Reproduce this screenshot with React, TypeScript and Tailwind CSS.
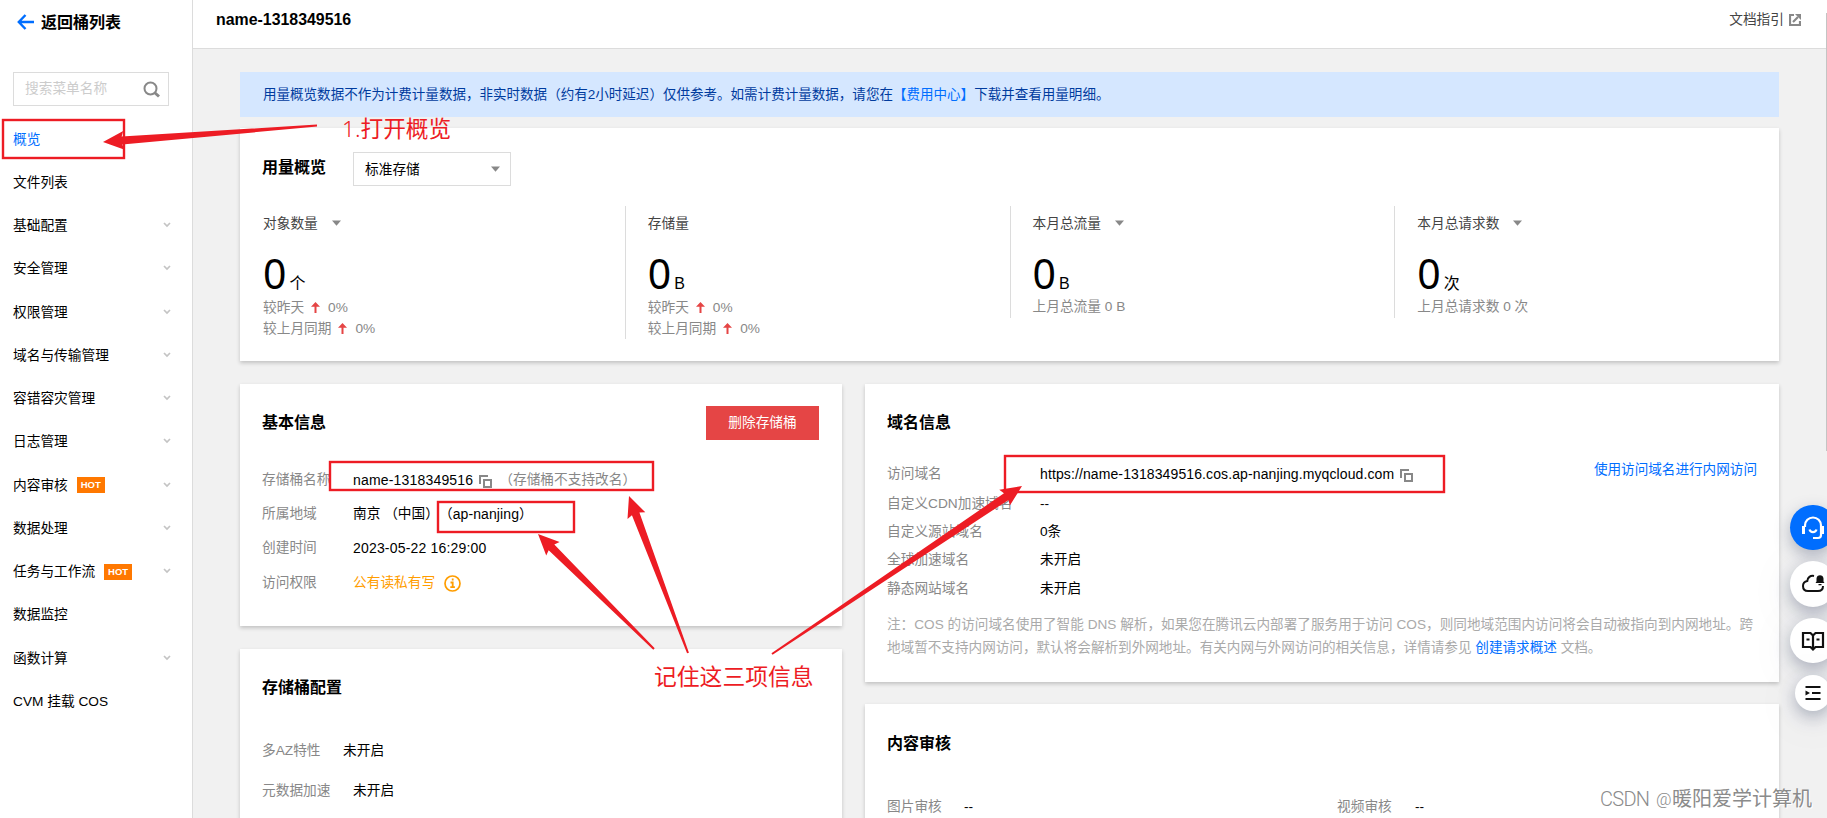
import type { ReactNode } from "react";

const menu = [
  { name: "概览", active: true },
  { name: "文件列表" },
  { name: "基础配置", more: true },
  { name: "安全管理", more: true },
  { name: "权限管理", more: true },
  { name: "域名与传输管理", more: true },
  { name: "容错容灾管理", more: true },
  { name: "日志管理", more: true },
  { name: "内容审核", more: true, hot: true },
  { name: "数据处理", more: true },
  { name: "任务与工作流", more: true, hot: true },
  { name: "数据监控" },
  { name: "函数计算", more: true },
  { name: "CVM 挂载 COS" },
];

function Caret({ className = "" }: { className?: string }) {
  return (
    <svg className={className} width="9" height="6" viewBox="0 0 9 6">
      <path d="M0 0.5h9L4.5 5.8z" fill="#888" />
    </svg>
  );
}

function CopyIcon({ className = "" }: { className?: string }) {
  return (
    <svg className={className} width="13" height="13" viewBox="0 0 13 13" fill="none" stroke="#888" strokeWidth="2">
      <path d="M1 9V1h8" />
      <path d="M5 5h7v7H5z" />
    </svg>
  );
}

function UpArrow() {
  return (
    <svg width="9" height="11" viewBox="0 0 9 11">
      <path d="M4.5 0L9 4.8H5.5V11h-2V4.8H0z" fill="#e54545" />
    </svg>
  );
}

function Sidebar() {
  return (
    <aside className="flex w-[193px] shrink-0 flex-col border-r border-[#dcdcdc] bg-white">
      <div className="flex h-[44px] items-center pl-[17px]">
        <svg width="18" height="16" viewBox="0 0 18 16" fill="none" stroke="#006eff" strokeWidth="2.400">
          <path d="M8.500 1L1.800 8l6.700 7M2 8h15" />
        </svg>
        <span className="mt-[2px] ml-1.5 text-base font-bold">返回桶列表</span>
      </div>

      {/* Search */}
      <div className="mt-7 ml-[13px] flex h-[34px] w-[156px] items-center justify-between border border-[#dcdcdc] pr-2 pl-[11px]">
        <span className="text-[#ccc]">搜索菜单名称</span>
        <svg width="17" height="17" viewBox="0 0 17 17" fill="none" stroke="#888" strokeWidth="2">
          <circle cx="7.500" cy="7.500" r="6" />
          <path d="M11.500 11.500L16 15.500" strokeWidth="3" />
        </svg>
      </div>

      <ul className="mt-[12px]">
        {menu.map((item) => (
          <li key={item.name} className="flex h-[43.250px] items-center pr-[21px] pl-[13px]">
            <span className={item.active ? "text-[#006eff]" : ""}>{item.name}</span>
            {item.hot && (
              <span className="-mt-px ml-[9px] flex h-4 w-7 items-center justify-center bg-[#ff7800] text-[9.500px] font-bold text-white">
                HOT
              </span>
            )}
            {item.more && (
              <svg className="mt-[-2px] ml-auto" width="8" height="6" viewBox="0 0 8 6" fill="none" stroke="#c4c4c4" strokeWidth="1.700">
                <path d="M1 1l3 3 3-3" />
              </svg>
            )}
          </li>
        ))}
      </ul>
    </aside>
  );
}

type StatProps = {
  label: string;
  unit: string;
  caret?: boolean;
  first?: boolean;
  tall?: boolean;
  children: ReactNode;
};

function Stat({ label, unit, caret, first, tall, children }: StatProps) {
  return (
    <div
      className={`flex-1 border-l pl-[22px] ${first ? "border-transparent" : "border-[#dcdcdc]"} ${tall ? "h-[133px]" : "h-[112px]"}`}
    >
      <div className="flex h-[34px] items-center text-[#444]">
        <span className="mt-px">{label}</span>
        {caret && <Caret className="ml-[14px]" />}
      </div>
      <div className="flex h-[57px] items-baseline">
        <span className="font-['Noto_Sans'] text-[41px] leading-[67px] tracking-[-1px]">0</span>
        <span className="ml-[4px] text-base">{unit}</span>
      </div>
      <div className="text-[#888]">{children}</div>
    </div>
  );
}

function Trend({ label }: { label: string }) {
  return (
    <div className="flex h-[21px] items-center">
      <span className="mr-[7px]">{label}</span>
      <UpArrow />
      <span className="ml-[8px]">0%</span>
    </div>
  );
}

function Card({ className = "", children }: { className?: string; children: ReactNode }) {
  return <section className={`bg-white shadow-[0_2px_4px_rgba(0,0,0,0.2)] ${className}`}>{children}</section>;
}

function Title({ children }: { children: ReactNode }) {
  return <h3 className="text-base font-bold">{children}</h3>;
}

function BasicInfo() {
  return (
    <Card className="h-[242px] pt-[22px] pr-[23px] pl-[22px]">
      <div className="flex h-[34px] items-center justify-between">
        <Title>基本信息</Title>
        <button className="h-[34px] w-[113px] bg-[#e54545] text-white">删除存储桶</button>
      </div>
      <div className="mt-[23px] flex flex-col">
        <div className="flex h-[34.200px] items-center">
          <span className="w-[91px] text-[#888]">存储桶名称</span>
          <span className="text-sm tracking-[0.180px]">name-1318349516</span>
          <CopyIcon className="mt-[3px] ml-[6px]" />
          <span className="ml-[7px] text-[#888]">（存储桶不支持改名）</span>
        </div>
        <div className="flex h-[34.200px] items-center">
          <span className="w-[91px] text-[#888]">所属地域</span>
          <span>南京 （中国）</span>
          <span>（</span>
          <span className="text-sm tracking-[0.100px]">ap-nanjing</span>
          <span>）</span>
        </div>
        <div className="flex h-[34.200px] items-center">
          <span className="w-[91px] text-[#888]">创建时间</span>
          <span className="text-sm tracking-[0.180px]">2023-05-22 16:29:00</span>
        </div>
        <div className="flex h-[34.200px] items-center">
          <span className="w-[91px] text-[#888]">访问权限</span>
          <span className="mt-px text-[#ff9d00]">公有读私有写</span>
          <svg className="mt-[2px] ml-[9px]" width="17" height="17" viewBox="0 0 17 17" fill="none" stroke="#ff9d00">
            <circle cx="8.500" cy="8.500" r="7.500" strokeWidth="1.700" />
            <path d="M8.700 3.500v2M6.500 7.500h2.200v4.500M6.300 12.200h4.600" strokeWidth="1.800" />
          </svg>
        </div>
      </div>
    </Card>
  );
}

function BucketConfig() {
  return (
    <Card className="h-[300px] px-[22px] pt-[22px]">
      <div className="flex h-[34px] items-center">
        <Title>存储桶配置</Title>
      </div>
      <div className="mt-[26px] flex h-10 items-center">
        <span className="w-[81px] text-[#888]">多AZ特性</span>
        <span>未开启</span>
      </div>
      <div className="flex h-10 items-center">
        <span className="w-[91px] text-[#888]">元数据加速</span>
        <span>未开启</span>
      </div>
    </Card>
  );
}

const domainRows = [
  ["自定义CDN加速域名", "--"],
  ["自定义源站域名", "0条"],
  ["全球加速域名", "未开启"],
  ["静态网站域名", "未开启"],
];

function DomainInfo() {
  return (
    <Card className="h-[298px] px-[22px] pt-[22px]">
      <div className="flex h-[34px] items-center">
        <Title>域名信息</Title>
      </div>
      <div className="mt-[19px] mb-[1.500px] flex h-[29px] items-center">
        <span className="w-[153px] text-[#888]">访问域名</span>
        <span className="text-sm tracking-[0.110px]">https://name-1318349516.cos.ap-nanjing.myqcloud.com</span>
        <CopyIcon className="mt-[3px] ml-[6px]" />
        <a className="-mt-2 ml-auto text-[13.600px] text-[#006eff]">使用访问域名进行内网访问</a>
      </div>
      {domainRows.map(([label, value]) => (
        <div key={label} className="flex h-[28.300px] items-center">
          <span className="w-[153px] text-[#888]">{label}</span>
          <span>{value}</span>
        </div>
      ))}
      <p className="mt-[10px] text-[13.600px] leading-[23px] whitespace-nowrap text-[#aaa]">
        <span className="tracking-[0.030px]">
          注：COS 的访问域名使用了智能 DNS 解析，如果您在腾讯云内部署了服务用于访问 COS，则同地域范围内访问将会自动被指向到内网地址。跨
        </span>
        <br />
        地域暂不支持内网访问，默认将会解析到外网地址。有关内网与外网访问的相关信息，详情请参见{" "}
        <a className="text-[#006eff]">创建请求概述</a> 文档。
      </p>
    </Card>
  );
}

function ContentAudit() {
  return (
    <Card className="h-[300px] px-[22px] pt-[23px]">
      <div className="flex h-[34px] items-center">
        <Title>内容审核</Title>
      </div>
      <div className="mt-[29px] flex h-[34px] items-center">
        <span className="w-[77px] text-[#888]">图片审核</span>
        <span className="w-[373px]">--</span>
        <span className="w-[78px] text-[#888]">视频审核</span>
        <span>--</span>
      </div>
    </Card>
  );
}

function FloatButtons() {
  return (
    <div className="absolute top-[505px] left-[1790px] flex w-[46px] flex-col items-center">
      <div className="flex h-[45px] w-[46px] items-center justify-center rounded-full bg-[#006eff] shadow-[0_6px_16px_rgba(55,65,100,0.35)]">
        <svg width="24" height="24" viewBox="0 0 24 24" fill="none" stroke="#fff" strokeWidth="2.200">
          <path d="M4 11V9.500a8 8 0 0 1 16 0V19a3 3 0 0 1-3 3h-5" />
          <path d="M2.500 10v8M21.500 10v8" strokeWidth="3" />
          <path d="M8.500 13.500c1 3.500 6 3.500 7 0" />
        </svg>
      </div>
      <div className="mt-[11px] flex h-[46px] w-[46px] items-center justify-center rounded-full bg-white shadow-[0_6px_16px_rgba(55,65,100,0.35),0_8px_50px_rgba(55,65,100,0.08)]">
        <svg width="24" height="24" viewBox="0 0 24 24" fill="none" stroke="#111" strokeWidth="2">
          <path d="M13 4c-3.500-.8-6.500 1.500-6.700 5C3.500 9.500 2 11.500 2 14c0 3 2 5 5 5h10c3 0 5-1.500 5-5" />
          <path d="M14.500 11h9l-1-1.500V6.500c0-4.500-7-4.500-7 0v3zM17.500 12h3v1.200h-3z" fill="#111" stroke="none" />
        </svg>
      </div>
      <div className="mt-[11px] flex h-[45px] w-[46px] items-center justify-center rounded-full bg-white shadow-[0_6px_16px_rgba(55,65,100,0.35),0_8px_50px_rgba(55,65,100,0.08)]">
        <svg width="24" height="24" viewBox="0 0 24 24" fill="none" stroke="#111" strokeWidth="2.200">
          <path d="M12 6.500L9.500 4H2v14h7.500l2.500 2.500 2.500-2.500H22V4h-7.500zM12 6v14M5.500 10.500h3M15.500 10.500h3" />
        </svg>
      </div>
      <div className="mt-[12px] flex h-9 w-9 items-center justify-center rounded-full bg-white shadow-[0_6px_16px_rgba(55,65,100,0.35),0_8px_50px_rgba(55,65,100,0.08)]">
        <svg width="16" height="16" viewBox="0 0 16 16" fill="none" stroke="#111" strokeWidth="2">
          <path d="M0.500 2h15M7 8h8.500M0.500 14h15" />
          <path d="M0.500 5.500L5 8l-4.500 2.500z" fill="#111" stroke="none" />
        </svg>
      </div>
    </div>
  );
}

/* tail x/y -> tip x/y */
const arrows = [
  [317, 125.5, 103, 142],
  [654, 649, 538, 534],
  [688, 653, 629, 496],
  [772, 654, 1022, 486],
];

function arrowPoints([x1, y1, x2, y2]: number[]) {
  const len = Math.hypot(x2 - x1, y2 - y1);
  const ux = (x2 - x1) / len;
  const uy = (y2 - y1) / len;
  const at = (back: number, side: number) =>
    `${x2 - ux * back - uy * side},${y2 - uy * back + ux * side}`;
  return [at(0, 0), at(21, 9.5), at(19, 4), at(len, 1), at(len, -1), at(19, -4), at(21, -9.5)].join(" ");
}

function Annotations() {
  return (
    <div className="pointer-events-none absolute inset-0">
      <svg className="absolute inset-0" width="1827" height="818" viewBox="0 0 1827 818">
        <g fill="none" stroke="#ed1c24" strokeWidth="2.400">
          <rect x="3" y="120" width="121" height="38" />
          <rect x="330" y="462" width="323" height="28" />
          <rect x="438" y="502" width="136" height="30" />
          <rect x="1005" y="456" width="439" height="36" />
        </g>
        {arrows.map((a) => (
          <polygon key={a.join()} points={arrowPoints(a)} fill="#ed1c24" />
        ))}
      </svg>
      <div className="absolute top-[112px] left-[342px] text-[22.700px] leading-[34px] whitespace-nowrap text-[#ed1c24]">
        <span className="font-['Noto_Sans'] font-light">1.</span>打开概览
      </div>
      <div className="absolute top-[660px] left-[654px] text-[22.800px] leading-[34px] whitespace-nowrap text-[#ed1c24]">
        记住这三项信息
      </div>
      <div className="absolute top-[784px] left-[1600px] flex items-center text-[20px] leading-[30px] whitespace-nowrap text-[#8b8b8b] [text-shadow:1px_1px_0_#fff]">
        <span className="w-[56px] font-['Roboto'] font-light tracking-[-0.700px]">CSDN</span>
        <span className="w-[16px] font-['Roboto'] text-[17px] font-light">@</span>
        <span>暖阳爱学计算机</span>
      </div>
    </div>
  );
}

export default function App() {
  return (
    <div className="relative flex h-[818px] w-[1827px] overflow-hidden bg-[#f1f1f1] font-['Liberation_Sans','Noto_Sans_CJK_SC',sans-serif] text-[13.700px] leading-5 text-black">
      <Sidebar />

      <div className="flex min-w-0 flex-1 flex-col">
        <header className="flex h-[49px] shrink-0 items-start justify-between border-b border-[#dcdcdc] bg-white pt-[10px] pr-[26px] pl-[23px]">
          <h1 className="text-[15.900px] font-bold">name-1318349516</h1>
          <div className="flex items-center text-[#444]">
            文档指引
            <svg className="-mt-px ml-[5px]" width="12" height="12" viewBox="0 0 12 12" fill="none" stroke="#888" strokeWidth="2.200">
              <path d="M5 1H1v10h10V7M4 8l5-5" />
              <path d="M6 0h6v6z" fill="#888" stroke="none" />
            </svg>
          </div>
        </header>

        <main className="flex w-[1586px] flex-col pt-[23px] pl-[47px]">
          <div className="flex h-[45px] items-center bg-[#d5e7ff] px-[23px] text-[13.540px] text-[#003b9e]">
            <span className="whitespace-nowrap">
              用量概览数据不作为计费计量数据，非实时数据（约有2小时延迟）仅供参考。如需计费计量数据，请您在
              <a className="text-[#006eff]">【费用中心】</a>下载并查看用量明细。
            </span>
          </div>

          {/* Usage */}
          <Card className="mt-[11px] h-[233px] pt-6">
            <div className="flex items-center pl-[22px]">
              <div className="-mt-[2px] w-[91px]">
                <Title>用量概览</Title>
              </div>
              <div className="flex h-[34px] w-[158px] items-center justify-between border border-[#dcdcdc] pr-[10px] pl-[11px]">
                <span className="mt-px">标准存储</span>
                <Caret />
              </div>
            </div>
            <div className="mt-5 flex">
              <Stat label="对象数量" unit="个" caret first tall>
                <Trend label="较昨天" />
                <Trend label="较上月同期" />
              </Stat>
              <Stat label="存储量" unit="B" tall>
                <Trend label="较昨天" />
                <Trend label="较上月同期" />
              </Stat>
              <Stat label="本月总流量" unit="B" caret>
                上月总流量 0 B
              </Stat>
              <Stat label="本月总请求数" unit="次" caret>
                上月总请求数 0 次
              </Stat>
            </div>
          </Card>

          <div className="mt-[23px] flex gap-[23px]">
            <div className="flex w-[602px] flex-col gap-[23px]">
              <BasicInfo />
              <BucketConfig />
            </div>
            <div className="flex flex-1 flex-col gap-[22px]">
              <DomainInfo />
              <ContentAudit />
            </div>
          </div>
        </main>
      </div>

      <div className="absolute top-[13px] right-0 h-[438px] w-px bg-[#c4c4c4]" />
      <FloatButtons />
      <Annotations />
    </div>
  );
}
